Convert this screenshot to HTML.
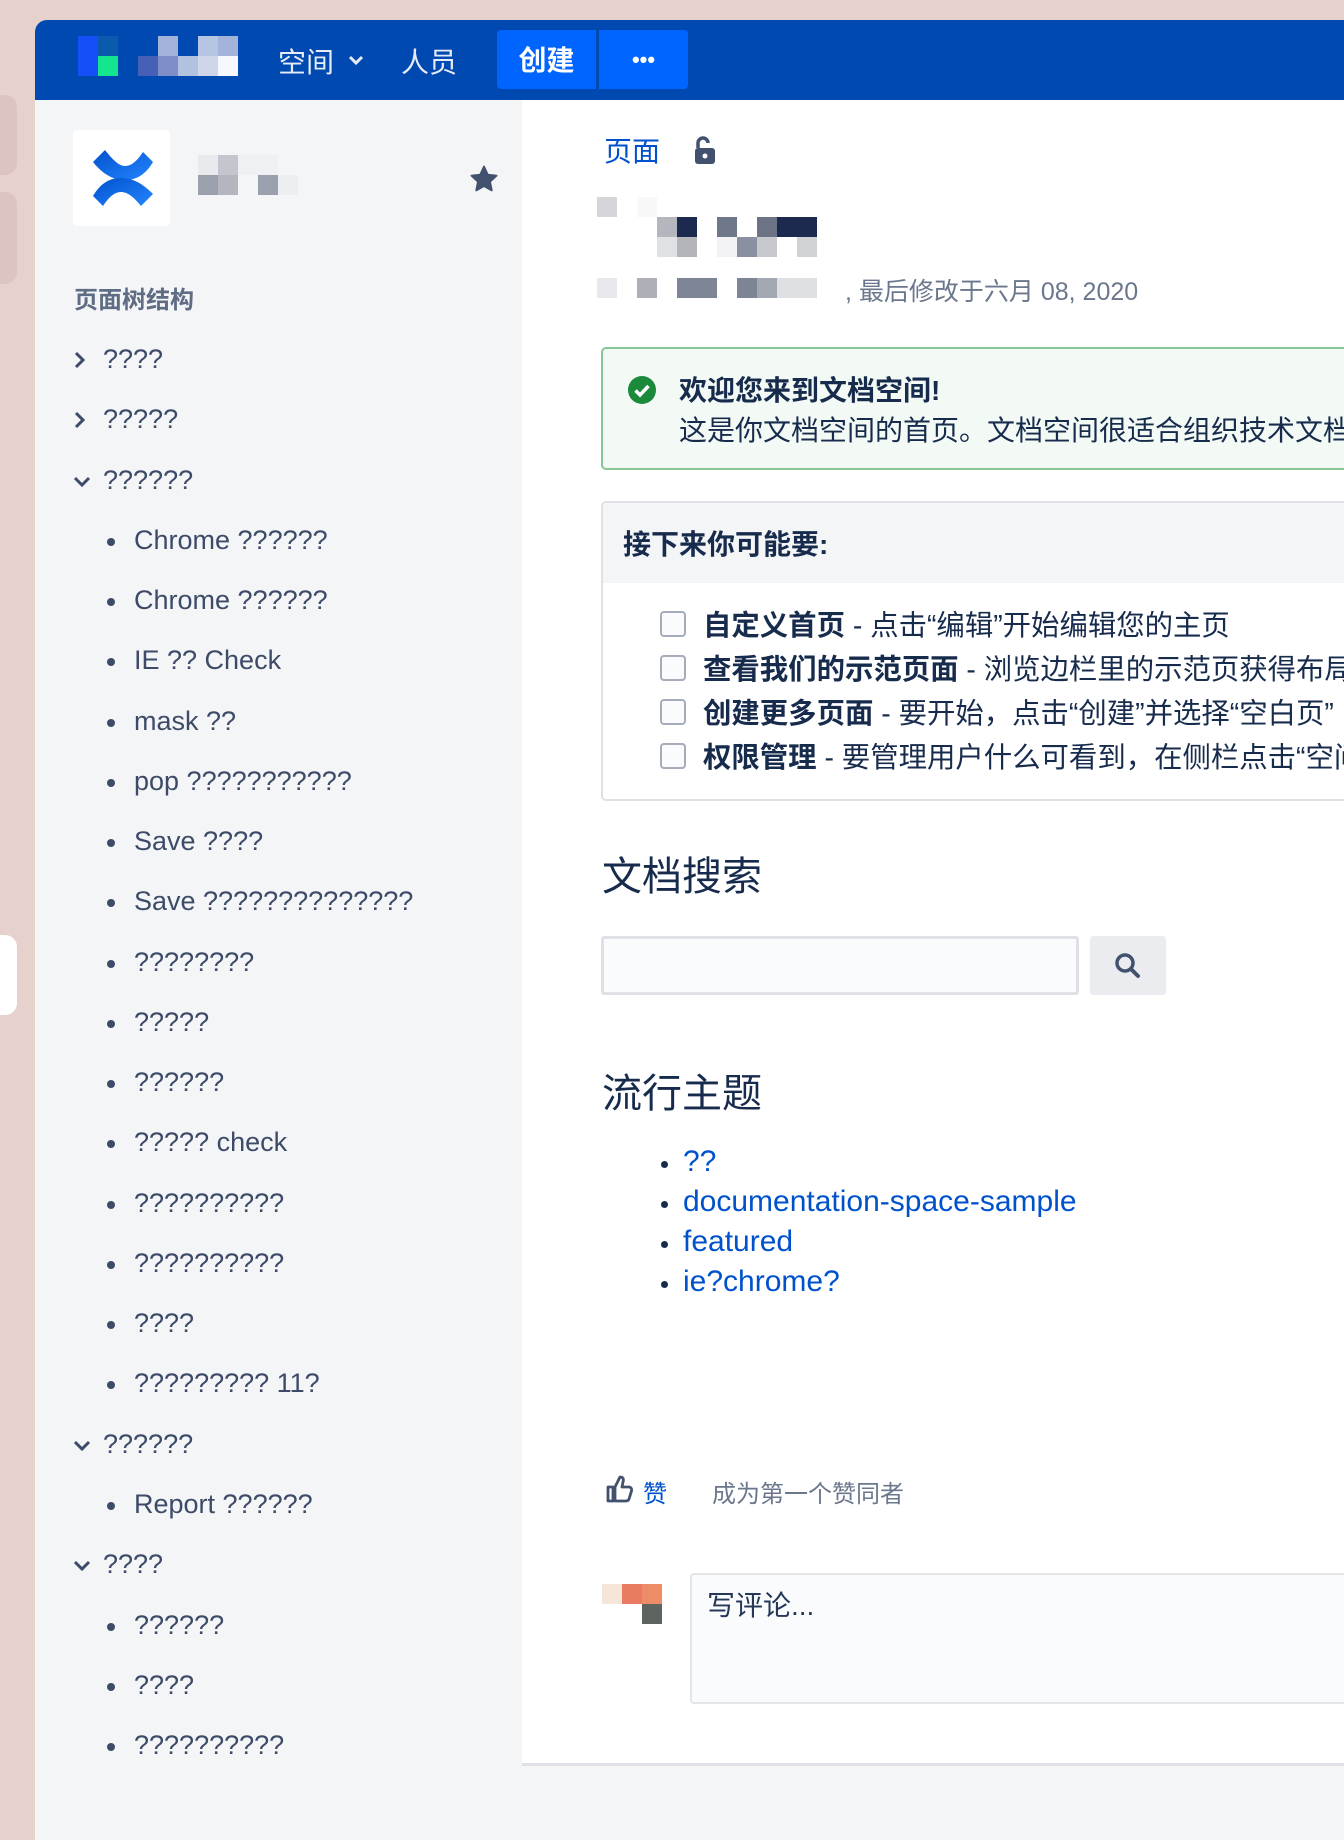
<!DOCTYPE html>
<html><head><meta charset="utf-8"><style>
*{margin:0;padding:0;box-sizing:border-box}
body{width:1344px;height:1830px;background:#e6d1cc;position:relative;overflow:hidden;font-family:"Liberation Sans","Noto Sans CJK SC",sans-serif;color:#172b4d}
.abs{position:absolute}
#win{position:absolute;left:35px;top:20px;width:1320px;height:1820px;border-radius:12px 0 0 0;overflow:hidden;background:#f4f5f7}
#hdr{position:absolute;left:0;top:0;width:100%;height:80px;background:#0049b0}
.px{position:absolute}
#side{position:absolute;left:0;top:80px;width:487px;height:1760px;background:#f4f5f7}
#main{position:absolute;left:487px;top:80px;width:840px;height:1666px;background:#fff;border-bottom:3px solid #dfe1e6}
.tree{position:absolute;font-size:27px;color:#3d4b69;white-space:nowrap}
.t1{left:68px}
.t2{left:99px}
.bul{position:absolute;left:-27px;top:13px;width:8px;height:8px;border-radius:50%;background:#3d4b69}
.chev{position:absolute;left:-30px;top:6px}
.cb{position:absolute;width:26px;height:26px;border:2px solid #a5adba;border-radius:4px;background:#fafbfc}
.ci{position:absolute;left:181px;font-size:28.4px;color:#172b4d;white-space:nowrap}
.ci b{font-weight:bold}
.lnk{position:absolute;left:161px;font-size:30px;color:#0052cc}
.lnk:before{content:"";position:absolute;left:-22px;top:16px;width:7px;height:7px;border-radius:50%;background:#172b4d}
</style></head><body>
<div class="abs" style="left:-20px;top:95px;width:37px;height:80px;background:#dcc5c1;border-radius:12px"></div>
<div class="abs" style="left:-20px;top:192px;width:37px;height:92px;background:#dcc5c1;border-radius:12px"></div>
<div class="abs" style="left:-20px;top:935px;width:37px;height:80px;background:#fff;border-radius:12px"></div>
<div id="win">
<div id="hdr">
 <div class="px" style="left:43px;top:16px;width:20px;height:40px;background:#1450f5"></div>
 <div class="px" style="left:63px;top:16px;width:20px;height:20px;background:#0a5aae"></div>
 <div class="px" style="left:63px;top:36px;width:20px;height:20px;background:#14e68f"></div>
 <div class="px" style="left:103px;top:36px;width:20px;height:20px;background:#4560b6"></div>
 <div class="px" style="left:123px;top:16px;width:20px;height:20px;background:#a3b3dc"></div>
 <div class="px" style="left:123px;top:36px;width:20px;height:20px;background:#7d8ec8"></div>
 <div class="px" style="left:143px;top:36px;width:20px;height:20px;background:#b2c1e0"></div>
 <div class="px" style="left:163px;top:16px;width:20px;height:20px;background:#b7c5e4"></div>
 <div class="px" style="left:163px;top:36px;width:20px;height:20px;background:#d0d6ea"></div>
 <div class="px" style="left:183px;top:16px;width:20px;height:20px;background:#a3b3dc"></div>
 <div class="px" style="left:183px;top:36px;width:20px;height:20px;background:#f7f8fd"></div>
 <div class="abs" style="left:243px;top:21px;font-size:28px;color:#e6ecf7">空间</div>
 <svg class="abs" style="left:313px;top:33px" width="16" height="14" viewBox="0 0 16 14"><path d="M2 4l6 6 6-6" fill="none" stroke="#e6ecf7" stroke-width="3"/></svg>
 <div class="abs" style="left:366px;top:21px;font-size:28px;color:#e6ecf7">人员</div>
 <div class="abs" style="left:462px;top:10px;width:99px;height:59px;background:#0065ff;border-radius:4px 0 0 4px;color:#fff;font-weight:bold;font-size:28px;text-align:center;line-height:62px">创建</div>
 <div class="abs" style="left:564px;top:10px;width:89px;height:59px;background:#0065ff;border-radius:0 4px 4px 0;color:#fff;font-weight:bold;font-size:22px;text-align:center;line-height:59px">•••</div>
</div>
<div id="side">
 <div class="abs" style="left:38px;top:30px;width:97px;height:96px;background:#fff;border-radius:4px"></div>
 <svg class="abs" style="left:56px;top:48px" width="64" height="62" viewBox="0 0 64 62"><defs><linearGradient id="g" x1="0" y1="0" x2="1" y2="1"><stop offset="0" stop-color="#0052cc"/><stop offset="1" stop-color="#2684ff"/></linearGradient></defs><path d="M2 14 L14 2 C22 12 28 18 34 18 C42 18 48 10 52 4 L62 14 C56 24 48 32 34 32 C20 32 10 24 2 14Z" fill="url(#g)"/><path d="M62 46 L50 58 C42 48 36 44 30 44 C22 44 16 52 12 58 L2 48 C8 38 16 30 30 30 C44 30 54 38 62 46Z" fill="url(#g)"/></svg>
 <div class="px" style="left:163px;top:55px;width:20px;height:20px;background:#e9eaee"></div>
 <div class="px" style="left:183px;top:55px;width:20px;height:20px;background:#c3c6ce"></div>
 <div class="px" style="left:203px;top:55px;width:40px;height:20px;background:#eff0f3"></div>
 <div class="px" style="left:163px;top:75px;width:20px;height:20px;background:#9aa0ac"></div>
 <div class="px" style="left:183px;top:75px;width:20px;height:20px;background:#b3b6bf"></div>
 <div class="px" style="left:223px;top:75px;width:20px;height:20px;background:#9aa0ac"></div>
 <div class="px" style="left:243px;top:75px;width:20px;height:20px;background:#eceef2"></div>
 <svg class="abs" style="left:434px;top:64px" width="30" height="30" viewBox="0 0 24 24"><path d="M12 2l3 6.5 7 .8-5.2 4.8 1.4 7L12 17.6 5.8 21.1l1.4-7L2 9.3l7-.8z" fill="#42526e" stroke="#42526e" stroke-linejoin="round" stroke-width="1.5"/></svg>
 <div class="abs" style="left:39px;top:180px;font-size:24px;font-weight:bold;color:#5e6c84">页面树结构</div>

 <div class="tree t1" style="top:244px"><svg class="chev" width="14" height="20" viewBox="0 0 14 20"><path d="M3 3l7 7-7 7" fill="none" stroke="#3d4b69" stroke-width="3"/></svg>????</div>
 <div class="tree t1" style="top:304px"><svg class="chev" width="14" height="20" viewBox="0 0 14 20"><path d="M3 3l7 7-7 7" fill="none" stroke="#3d4b69" stroke-width="3"/></svg>?????</div>
 <div class="tree t1" style="top:365px"><svg class="chev" style="top:10px" width="18" height="14" viewBox="0 0 18 14"><path d="M2 3l7 7 7-7" fill="none" stroke="#3d4b69" stroke-width="3"/></svg>??????</div>
 <div class="tree t2" style="top:425px"><span class="bul"></span>Chrome ??????</div>
 <div class="tree t2" style="top:485px"><span class="bul"></span>Chrome ??????</div>
 <div class="tree t2" style="top:545px"><span class="bul"></span>IE ?? Check</div>
 <div class="tree t2" style="top:606px"><span class="bul"></span>mask ??</div>
 <div class="tree t2" style="top:666px"><span class="bul"></span>pop ???????????</div>
 <div class="tree t2" style="top:726px"><span class="bul"></span>Save ????</div>
 <div class="tree t2" style="top:786px"><span class="bul"></span>Save ??????????????</div>
 <div class="tree t2" style="top:847px"><span class="bul"></span>????????</div>
 <div class="tree t2" style="top:907px"><span class="bul"></span>?????</div>
 <div class="tree t2" style="top:967px"><span class="bul"></span>??????</div>
 <div class="tree t2" style="top:1027px"><span class="bul"></span>????? check</div>
 <div class="tree t2" style="top:1088px"><span class="bul"></span>??????????</div>
 <div class="tree t2" style="top:1148px"><span class="bul"></span>??????????</div>
 <div class="tree t2" style="top:1208px"><span class="bul"></span>????</div>
 <div class="tree t2" style="top:1268px"><span class="bul"></span>????????? 11?</div>
 <div class="tree t1" style="top:1329px"><svg class="chev" style="top:10px" width="18" height="14" viewBox="0 0 18 14"><path d="M2 3l7 7 7-7" fill="none" stroke="#3d4b69" stroke-width="3"/></svg>??????</div>
 <div class="tree t2" style="top:1389px"><span class="bul"></span>Report ??????</div>
 <div class="tree t1" style="top:1449px"><svg class="chev" style="top:10px" width="18" height="14" viewBox="0 0 18 14"><path d="M2 3l7 7 7-7" fill="none" stroke="#3d4b69" stroke-width="3"/></svg>????</div>
 <div class="tree t2" style="top:1510px"><span class="bul"></span>??????</div>
 <div class="tree t2" style="top:1570px"><span class="bul"></span>????</div>
 <div class="tree t2" style="top:1630px"><span class="bul"></span>??????????</div>
 <div class="abs" style="left:492px;top:1029px;width:3px;height:20px;background:#a5adba"></div>
 <div class="abs" style="left:497px;top:1029px;width:3px;height:20px;background:#a5adba"></div>
</div>
<div id="main">
 <div class="abs" style="left:82px;top:30px;font-size:28px;color:#0052cc">页面</div>
 <svg class="abs" style="left:170px;top:36px" width="26" height="30" viewBox="0 0 26 30"><path d="M6 12V7a5 5 0 0 1 10 0" fill="none" stroke="#42526e" stroke-width="3.5"/><rect x="3" y="12" width="20" height="16" rx="3" fill="#42526e"/><circle cx="13" cy="20" r="2.5" fill="#fff"/></svg>
 <div class="px" style="left:75px;top:97px;width:20px;height:20px;background:#d5d6d9"></div>
 <div class="px" style="left:115px;top:97px;width:20px;height:20px;background:#f8f8f9"></div>
 <div class="px" style="left:135px;top:117px;width:20px;height:20px;background:#b4b6bd"></div>
 <div class="px" style="left:155px;top:117px;width:20px;height:20px;background:#1b2a4e"></div>
 <div class="px" style="left:135px;top:137px;width:20px;height:20px;background:#e0e1e4"></div>
 <div class="px" style="left:155px;top:137px;width:20px;height:20px;background:#b3b5ba"></div>
 <div class="px" style="left:195px;top:117px;width:20px;height:20px;background:#6f778a"></div>
 <div class="px" style="left:195px;top:137px;width:20px;height:20px;background:#f3f3f5"></div>
 <div class="px" style="left:215px;top:137px;width:20px;height:20px;background:#8a90a0"></div>
 <div class="px" style="left:235px;top:117px;width:20px;height:20px;background:#6b7385"></div>
 <div class="px" style="left:255px;top:117px;width:40px;height:20px;background:#1b2a4e"></div>
 <div class="px" style="left:235px;top:137px;width:20px;height:20px;background:#c7c9ce"></div>
 <div class="px" style="left:275px;top:137px;width:20px;height:20px;background:#d0d2d6"></div>
 <div class="px" style="left:75px;top:178px;width:20px;height:20px;background:#e8e9ec"></div>
 <div class="px" style="left:115px;top:178px;width:20px;height:20px;background:#adb0b7"></div>
 <div class="px" style="left:155px;top:178px;width:40px;height:20px;background:#7d8597"></div>
 <div class="px" style="left:215px;top:178px;width:40px;height:20px;background:#7c8496"></div>
 <div class="px" style="left:235px;top:178px;width:20px;height:20px;background:#a4a8b2"></div>
 <div class="px" style="left:255px;top:178px;width:40px;height:20px;background:#dfe0e4"></div>
 <div class="abs" style="left:323px;top:172px;font-size:25px;color:#6b778c">, 最后修改于六月 08, 2020</div>

 <div class="abs" style="left:79px;top:247px;width:800px;height:123px;background:#f3f9f4;border:2px solid #87c795;border-radius:5px"></div>
 <svg class="abs" style="left:105px;top:275px" width="30" height="30" viewBox="0 0 30 30"><circle cx="15" cy="15" r="14" fill="#1b8a3a"/><path d="M8.5 15.5l4.5 4.5 8.5-9" fill="none" stroke="#fff" stroke-width="3.5"/></svg>
 <div class="abs" style="left:157px;top:269px;font-size:28px;font-weight:bold;color:#172b4d">欢迎您来到文档空间!</div>
 <div class="abs" style="left:157px;top:309px;font-size:28px;color:#172b4d;white-space:nowrap">这是你文档空间的首页。文档空间很适合组织技术文档</div>

 <div class="abs" style="left:79px;top:401px;width:800px;height:300px;background:#fff;border:2px solid #dfe1e6;border-radius:5px;overflow:hidden"><div style="height:80px;background:#f4f5f7"></div></div>
 <div class="abs" style="left:101px;top:423px;font-size:28px;font-weight:bold;color:#172b4d">接下来你可能要:</div>
 <div class="cb" style="left:138px;top:511px"></div><div class="ci" style="top:503px"><b>自定义首页</b> - 点击“编辑”开始编辑您的主页</div>
 <div class="cb" style="left:138px;top:555px"></div><div class="ci" style="top:547px"><b>查看我们的示范页面</b> - 浏览边栏里的示范页获得布局</div>
 <div class="cb" style="left:138px;top:599px"></div><div class="ci" style="top:591px"><b>创建更多页面</b> - 要开始，点击“创建”并选择“空白页”</div>
 <div class="cb" style="left:138px;top:643px"></div><div class="ci" style="top:635px"><b>权限管理</b> - 要管理用户什么可看到，在侧栏点击“空间</div>

 <div class="abs" style="left:80px;top:744px;font-size:40px;color:#172b4d">文档搜索</div>
 <div class="abs" style="left:79px;top:836px;width:478px;height:59px;border:3px solid #dfe1e6;border-radius:3px;background:#fafbfc"></div>
 <div class="abs" style="left:568px;top:836px;width:76px;height:59px;background:#ebecf0;border-radius:3px"></div>
 <svg class="abs" style="left:592px;top:852px" width="28" height="28" viewBox="0 0 28 28"><circle cx="11" cy="11" r="8" fill="none" stroke="#42526e" stroke-width="3.5"/><path d="M17 17l7 7" stroke="#42526e" stroke-width="4" stroke-linecap="round"/></svg>

 <div class="abs" style="left:80px;top:961px;font-size:40px;color:#172b4d">流行主题</div>
 <div class="lnk" style="top:1045px">??</div>
 <div class="lnk" style="top:1085px">documentation-space-sample</div>
 <div class="lnk" style="top:1125px">featured</div>
 <div class="lnk" style="top:1165px">ie?chrome?</div>

 <svg class="abs" style="left:83px;top:1374px" width="30" height="30" viewBox="0 0 30 30"><path d="M3 13h5v14H3zM10 13l5-10c3 0 4 2 3 5l-1 5h7c2 0 3 2 2.5 4L24 25c-.5 1.5-1.5 2-3 2H10z" fill="none" stroke="#42526e" stroke-width="2.8" stroke-linejoin="round"/></svg>
 <div class="abs" style="left:121px;top:1374px;font-size:24px;color:#0052cc">赞</div>
 <div class="abs" style="left:190px;top:1374px;font-size:24px;color:#6b778c">成为第一个赞同者</div>

 <div class="px" style="left:80px;top:1484px;width:20px;height:20px;background:#f6e5d9"></div>
 <div class="px" style="left:100px;top:1484px;width:20px;height:20px;background:#e97b62"></div>
 <div class="px" style="left:120px;top:1484px;width:20px;height:20px;background:#ec8d68"></div>
 <div class="px" style="left:120px;top:1504px;width:20px;height:20px;background:#5e6560"></div>
 <div class="abs" style="left:168px;top:1473px;width:690px;height:131px;background:#fafbfc;border:2px solid #e4e6ea;border-radius:4px"></div>
 <div class="abs" style="left:185px;top:1484px;font-size:28px;color:#253858">写评论...</div>
</div>
</div>
</body></html>
